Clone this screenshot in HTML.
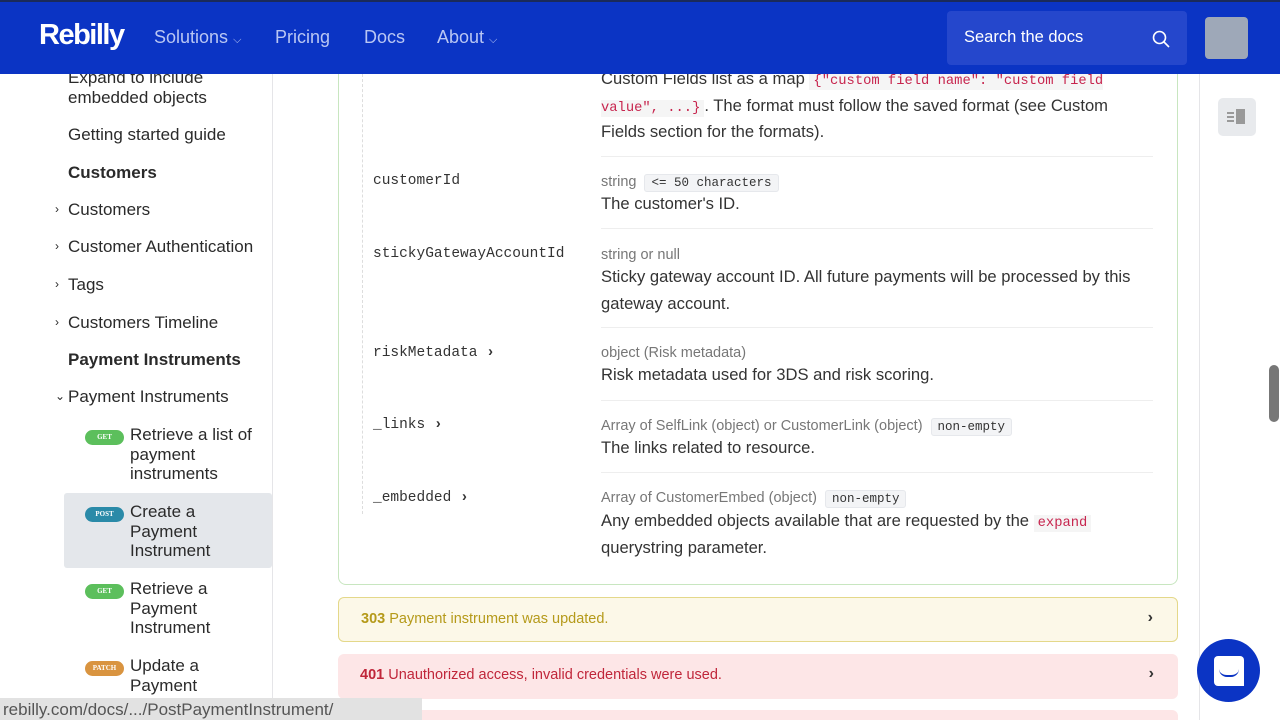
<!DOCTYPE html>
<html><head><meta charset="utf-8"><style>
*{box-sizing:border-box;margin:0;padding:0}
html{width:1280px;height:720px;overflow:hidden}
body{width:1280px;height:720px;overflow:hidden;font-family:"Liberation Sans",sans-serif;background:#fff;position:relative;color:#333}
.nav{position:absolute;left:0;top:0;width:1280px;height:74px;background:#0b34c4;border-top:2px solid #1a2a5a;z-index:5}
.logo{position:absolute;left:39px;top:17px;color:#fff;font-weight:bold;font-size:29px;letter-spacing:-1.5px}
.ni{position:absolute;top:25px;color:#b9c6f3;font-size:18px}
.search{position:absolute;left:947px;top:9px;width:240px;height:54px;background:#2547cc;border-radius:4px;color:#fff;font-size:16.5px;padding:17px 0 0 17px}
.avatar{position:absolute;left:1205px;top:15px;width:43px;height:42px;background:#9ea8b8;border-radius:4px}
.side{position:absolute;left:0;top:74px;width:273px;height:646px;background:#fff;border-right:1px solid #e5e5e8}
.si{position:absolute;font-size:17px;color:#2a2a2a;line-height:19.5px}
.b{font-weight:bold}
.chev{position:absolute;left:-13px;font-size:12px}
.badge{position:absolute;left:85px;width:39px;height:15px;border-radius:8px;color:#fff;font-size:7px;font-weight:bold;text-align:center;line-height:15px;font-family:"Liberation Serif",serif}
.main{position:absolute;left:338px;top:40px;width:840px;height:545px;border:1px solid #c8e6c0;border-top:none;border-radius:0 0 8px 8px}
.dash{position:absolute;left:362px;top:74px;height:440px;border-left:1px dashed #ddd}
.mono{position:absolute;left:373px;font-family:"Liberation Mono",monospace;font-size:14.5px;color:#333}
.t{position:absolute;left:601px;font-size:14.5px;color:#777}
.d{position:absolute;left:601px;font-size:16.6px;color:#333;line-height:26.5px;width:548px}
.hr{position:absolute;left:601px;width:552px;border-top:1px solid #eee}
.code{font-family:"Liberation Mono",monospace;font-size:13.8px;line-height:1;color:#c7254e;background:#f5f5f5;padding:1px 4px}
.pill{font-family:"Liberation Mono",monospace;font-size:12.5px;color:#333;background:#f3f4f6;border:1px solid #e6e8ec;border-radius:3px;padding:1px 6px;margin-left:8px}
.resp{position:absolute;left:338px;width:840px;height:45px;border-radius:6px;font-size:14.5px;padding:13px 0 0 22px}
.rc{position:absolute;right:24px;top:11px;color:#333;font-size:16px;font-weight:bold}
.right{position:absolute;left:1199px;top:74px;width:1px;height:646px;background:#e5e5e8}
.status{position:absolute;left:0;top:698px;width:422px;height:22px;background:#e2e2e2;color:#555;font-size:17px;padding:2px 0 0 3px;z-index:6}
</style></head><body>
<div class="nav">
<div class="logo">Rebilly</div>
<div class="ni" style="left:154px">Solutions <span style="font-size:11px">⌵</span></div>
<div class="ni" style="left:275px">Pricing</div>
<div class="ni" style="left:364px">Docs</div>
<div class="ni" style="left:437px">About <span style="font-size:11px">⌵</span></div>
<div class="search">Search the docs
<svg style="position:absolute;left:205px;top:19px" width="18" height="18" viewBox="0 0 18 18"><circle cx="7.5" cy="7.5" r="6" fill="none" stroke="#fff" stroke-width="1.6"/><line x1="12" y1="12" x2="17" y2="17" stroke="#fff" stroke-width="1.6"/></svg></div>
<div class="avatar"></div>
</div>
<div class="side">
<div class="si" style="left:68px;top:-6px">Expand to include<br>embedded objects</div>
<div class="si" style="left:68px;top:51px">Getting started guide</div>
<div class="si b" style="left:68px;top:89px">Customers</div>
<div class="si" style="left:68px;top:126px"><span class="chev">›</span>Customers</div>
<div class="si" style="left:68px;top:163px"><span class="chev">›</span>Customer Authentication</div>
<div class="si" style="left:68px;top:201px"><span class="chev">›</span>Tags</div>
<div class="si" style="left:68px;top:239px"><span class="chev">›</span>Customers Timeline</div>
<div class="si b" style="left:68px;top:276px">Payment Instruments</div>
<div class="si" style="left:68px;top:313px"><span class="chev">⌄</span>Payment Instruments</div>
<div style="position:absolute;left:64px;top:419px;width:208px;height:75px;background:#e4e7eb;border-radius:3px"></div>
<div class="badge" style="top:356px;background:#5cbf5c">GET</div>
<div class="si" style="left:130px;top:351px">Retrieve a list of<br>payment<br>instruments</div>
<div class="badge" style="top:433px;background:#2a8aa8">POST</div>
<div class="si" style="left:130px;top:428px">Create a<br>Payment<br>Instrument</div>
<div class="badge" style="top:510px;background:#5cbf5c">GET</div>
<div class="si" style="left:130px;top:505px">Retrieve a<br>Payment<br>Instrument</div>
<div class="badge" style="top:587px;background:#d99440">PATCH</div>
<div class="si" style="left:130px;top:582px">Update a<br>Payment<br>Instrument's</div>
</div>
<div class="main"></div>
<div class="dash"></div>
<div class="d" style="top:66px">Custom Fields list as a map <span class="code">{"custom field name": "custom field value", ...}</span>. The format must follow the saved format (see Custom Fields section for the formats).</div>
<div class="hr" style="top:156px"></div>
<div class="mono" style="top:173px">customerId</div>
<div class="t" style="top:174px">string<span class="pill">&lt;= 50 characters</span></div>
<div class="d" style="top:191px">The customer's ID.</div>
<div class="hr" style="top:228px"></div>
<div class="mono" style="top:246px">stickyGatewayAccountId</div>
<div class="t" style="top:247px">string or null</div>
<div class="d" style="top:264px">Sticky gateway account ID. All future payments will be processed by this gateway account.</div>
<div class="hr" style="top:327px"></div>
<div class="mono" style="top:345px">riskMetadata <b>›</b></div>
<div class="t" style="top:345px">object (Risk metadata)</div>
<div class="d" style="top:362px">Risk metadata used for 3DS and risk scoring.</div>
<div class="hr" style="top:400px"></div>
<div class="mono" style="top:417px">_links <b>›</b></div>
<div class="t" style="top:418px">Array of SelfLink (object) or CustomerLink (object)<span class="pill">non-empty</span></div>
<div class="d" style="top:435px">The links related to resource.</div>
<div class="hr" style="top:472px"></div>
<div class="mono" style="top:490px">_embedded <b>›</b></div>
<div class="t" style="top:490px">Array of CustomerEmbed (object)<span class="pill">non-empty</span></div>
<div class="d" style="top:508px;width:520px">Any embedded objects available that are requested by the <span class="code">expand</span> querystring parameter.</div>
<div class="resp" style="top:597px;background:#fcf8e8;border:1px solid #e4d88a;color:#b59a1a"><b>303</b> Payment instrument was updated.<span class="rc">›</span></div>
<div class="resp" style="top:654px;background:#fde6e7;color:#c0263a"><b>401</b> Unauthorized access, invalid credentials were used.<span class="rc">›</span></div>
<div class="resp" style="top:710px;height:10px;background:#fde6e7;border-radius:6px 6px 0 0"></div>
<div class="right"></div>
<div style="position:absolute;left:1218px;top:98px;width:38px;height:38px;background:#e8eaed;border-radius:5px"><div style="position:absolute;left:9px;top:14px;width:7px;height:2px;background:#999;box-shadow:0 4px #999,0 8px #999"></div><div style="position:absolute;left:18px;top:11px;width:9px;height:15px;background:#999"></div></div>
<div style="position:absolute;left:1269px;top:365px;width:10px;height:57px;background:#777;border-radius:5px"></div>
<div style="position:absolute;left:1197px;top:639px;width:63px;height:63px;background:#0b34c4;border-radius:50%"><div style="position:absolute;left:17px;top:17px;width:30px;height:30px;background:#fff;border-radius:4px 4px 0 4px"></div><div style="position:absolute;left:22px;top:30px;width:20px;height:8px;border-bottom:2px solid #0b34c4;border-radius:0 0 10px 10px"></div></div>
<div class="status">rebilly.com/docs/.../PostPaymentInstrument/</div>
</body></html>
